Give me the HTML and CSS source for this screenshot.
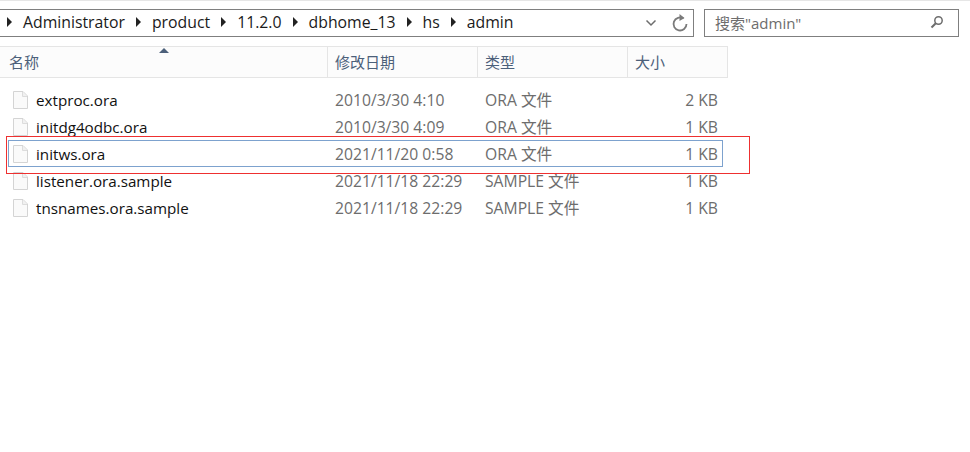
FILE: index.html
```html
<!DOCTYPE html>
<html lang="zh-CN">

<head>
  <meta charset="UTF-8" />
  <title>admin</title>
  <link rel="stylesheet" href="styles.css">
</head>

<body>

  <svg width="0" height="0" class="defs">
    <symbol id="file" viewBox="0 0 15 18">
      <path d="M.5.5h9.500l4.500 4.500v12.500H.5z" fill="#fafafa" stroke="#d4d4d4"/>
      <path d="M9.500 1v4.500H14" fill="#f0f0f0" stroke="#dcdcdc"/>
    </symbol>
  </svg>

  <div class="toolbar">
    <div class="address">
      <div class="crumbs">
        <span class="arrow"></span><span>Administrator</span>
        <span class="arrow"></span><span>product</span>
        <span class="arrow"></span><span>11.2.0</span>
        <span class="arrow"></span><span>dbhome_13</span>
        <span class="arrow"></span><span>hs</span>
        <span class="arrow"></span><span>admin</span>
      </div>
      <svg class="chevron" width="12" height="8" viewBox="0 0 12 8"><path d="M1.500 1.500 6 6l4.500-4.500" fill="none" stroke="#6d6d6d" stroke-width="1.500"/></svg>
      <svg class="refresh" width="18" height="20" viewBox="0 0 18 20"><path d="M12.500 5.500A6.500 6.500 0 1 0 15.500 11" fill="none" stroke="#7a7a7a" stroke-width="1.800"/><path d="M8.500 1v7l5-3z" fill="#7a7a7a"/></svg>
    </div>
    <div class="search">
      <span>搜索"admin"</span>
      <svg width="14" height="14" viewBox="0 0 14 14"><circle cx="8.500" cy="5.500" r="3.700" fill="none" stroke="#6d6d6d" stroke-width="1.500"/><path d="M5.800 8.200 1.500 12.500" stroke="#6d6d6d" stroke-width="2"/></svg>
    </div>
  </div>

  <div class="filelist">
    <div class="row head">
      <div class="col name">名称<span class="sort"></span></div>
      <div class="col date">修改日期</div>
      <div class="col type">类型</div>
      <div class="col size">大小</div>
    </div>

    <div class="rows">
      <div class="row item">
        <div class="col name"><svg class="file"><use href="#file"/></svg>extproc.ora</div>
        <div class="col date">2010/3/30 4:10</div>
        <div class="col type">ORA 文件</div>
        <div class="col size">2 KB</div>
      </div>
      <div class="row item">
        <div class="col name"><svg class="file"><use href="#file"/></svg>initdg4odbc.ora</div>
        <div class="col date">2010/3/30 4:09</div>
        <div class="col type">ORA 文件</div>
        <div class="col size">1 KB</div>
      </div>
      <div class="row item selected">
        <div class="col name"><svg class="file"><use href="#file"/></svg>initws.ora</div>
        <div class="col date">2021/11/20 0:58</div>
        <div class="col type">ORA 文件</div>
        <div class="col size">1 KB</div>
      </div>
      <div class="row item">
        <div class="col name"><svg class="file"><use href="#file"/></svg>listener.ora.sample</div>
        <div class="col date">2021/11/18 22:29</div>
        <div class="col type">SAMPLE 文件</div>
        <div class="col size">1 KB</div>
      </div>
      <div class="row item">
        <div class="col name"><svg class="file"><use href="#file"/></svg>tnsnames.ora.sample</div>
        <div class="col date">2021/11/18 22:29</div>
        <div class="col type">SAMPLE 文件</div>
        <div class="col size">1 KB</div>
      </div>
    </div>
  </div>

  <div class="redbox"></div>

</body>

</html>
```

FILE: styles.css
```css
body {
  margin: 0;
  height: 452px;
  overflow: hidden;
  position: relative;
  background-color: white;
  font-family: "Open Sans", "Noto Sans CJK SC", sans-serif;
  font-size: 15px;
  color: #1a1a1a;
  border-top: 1px solid #e6e6e6;
  box-sizing: border-box;
}

.defs {
  display: block;
  height: 0;
}

.toolbar {
  display: flex;
  height: 28px;
  margin-top: 8px;
  gap: 10px;
}

.address {
  width: 694px;
  box-sizing: border-box;
  display: flex;
  align-items: center;
  border: 1px solid #7f7f7f;
  border-left: none;
}

.crumbs {
  flex: 1;
  display: flex;
  align-items: center;
  gap: 11px;
  padding: 0 0 2px 7px;
  font-size: 15.8px;
}

.arrow {
  width: 0;
  height: 0;
  border-left: 5px solid #222;
  border-top: 5px solid transparent;
  border-bottom: 5px solid transparent;
}

.chevron {
  margin-right: 14px;
}

.refresh {
  margin-right: 4px;
}

.search {
  width: 255px;
  box-sizing: border-box;
  display: flex;
  align-items: center;
  justify-content: space-between;
  padding: 0 14px 2px 10px;
  border: 1px solid #7f7f7f;
  color: #6d6d6d;
}

.filelist {
  margin-top: 9px;
  width: 728px;
}

.row {
  display: flex;
}

.head {
  height: 32px;
  box-sizing: border-box;
  background-color: #fcfcfc;
  border-top: 1px solid #e5e5e5;
  border-bottom: 1px solid #e5e5e5;
  border-right: 1px solid #e5e5e5;
  color: #4c607a;
  position: relative;
}

.head .col {
  display: flex;
  align-items: center;
  border-right: 1px solid #e5e5e5;
  box-sizing: border-box;
  padding: 0 0 2px 7px;
}

.head .name {
  padding-left: 9px;
}

.head .col:last-child {
  border-right: none;
}

.col.name {
  width: 328px;
  box-sizing: border-box;
}

.col.date {
  width: 150px;
}

.col.type {
  width: 150px;
}

.col.size {
  flex: 1;
}

.sort {
  position: absolute;
  left: 159px;
  top: 1px;
  width: 0;
  height: 0;
  border-left: 5px solid transparent;
  border-right: 5px solid transparent;
  border-bottom: 5px solid #4c607a;
}

.rows {
  padding-top: 8px;
}

.item {
  height: 27px;
  align-items: center;
  color: #6d6d6d;
  box-sizing: border-box;
  font-size: 15.7px;
}

.item .col {
  box-sizing: border-box;
  padding-left: 7px;
}

.item .name {
  display: flex;
  align-items: center;
  color: #111;
  padding-left: 13px;
  font-size: 15.2px;
}

.item .size {
  text-align: right;
  padding-right: 10px;
}

.file {
  width: 15px;
  height: 18px;
  margin-right: 8px;
}

.selected {
  outline: 1px solid #7da2ce;
  outline-offset: -1px;
  margin: 0 5px 0 8px;
}

.selected .col.name {
  width: 320px;
  padding-left: 5px;
}

.selected .size {
  padding-right: 5px;
}

.redbox {
  position: absolute;
  left: 6px;
  top: 135px;
  width: 744px;
  height: 38px;
  box-sizing: border-box;
  border: 1px solid #ee3030;
}
```
